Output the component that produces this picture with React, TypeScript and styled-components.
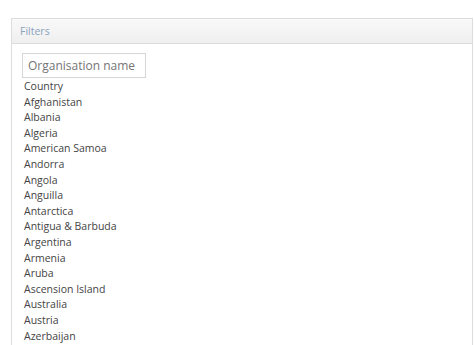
import React from 'react';
import styled, { createGlobalStyle } from 'styled-components';

const countries = [
	'Country',
	'Afghanistan',
	'Albania',
	'Algeria',
	'American Samoa',
	'Andorra',
	'Angola',
	'Anguilla',
	'Antarctica',
	'Antigua & Barbuda',
	'Argentina',
	'Armenia',
	'Aruba',
	'Ascension Island',
	'Australia',
	'Austria',
	'Azerbaijan',
];

const GlobalStyle = createGlobalStyle`
	html, body {
		margin: 0;
		padding: 0;
		background: #ffffff;
		overflow: hidden;
	}
	body {
		font-family: "Open Sans", "Noto Sans", sans-serif;
	}
`;

const Page = styled.div`
	padding: 18px 1px 0 11px;
	height: 345px;
	box-sizing: border-box;
	overflow: hidden;
`;

const Panel = styled.div`
	border: 1px solid #dddddd;
	border-bottom: none;
	height: 100%;
`;

const PanelHeader = styled.div`
	height: 24px;
	padding: 0 8px;
	display: flex;
	align-items: center;
	background: linear-gradient(to bottom, #f9f9f9, #efefef);
	border-bottom: 1px solid #dcdcdc;
	font-size: 10.5px;
	color: #8aa3bd;
`;

const PanelBody = styled.div`
	padding: 9px 10px 0 10px;
`;

const NameInput = styled.input`
	display: block;
	width: 124px;
	height: 25px;
	box-sizing: border-box;
	border: 1px solid #d6d6d6;
	padding: 0 5px;
	font-family: "Open Sans", "Noto Sans", sans-serif;
	font-size: 12px;
	color: #555;
	outline: none;

	::placeholder {
		color: #8a8a8a;
	}
`;

const CountryList = styled.div`
	margin-top: 1px;
	padding-left: 2px;
`;

const CountryItem = styled.div`
	font-size: 10.5px;
	line-height: 15.6px;
	color: #444444;
	white-space: nowrap;
`;

export default function App() {
	return (
		<>
			<GlobalStyle />
			<Page>
				<Panel>
					<PanelHeader>Filters</PanelHeader>
					<PanelBody>
						<NameInput placeholder="Organisation name" />
						<CountryList>
							{countries.map((c) => (
								<CountryItem key={c}>{c}</CountryItem>
							))}
						</CountryList>
					</PanelBody>
				</Panel>
			</Page>
		</>
	);
}
